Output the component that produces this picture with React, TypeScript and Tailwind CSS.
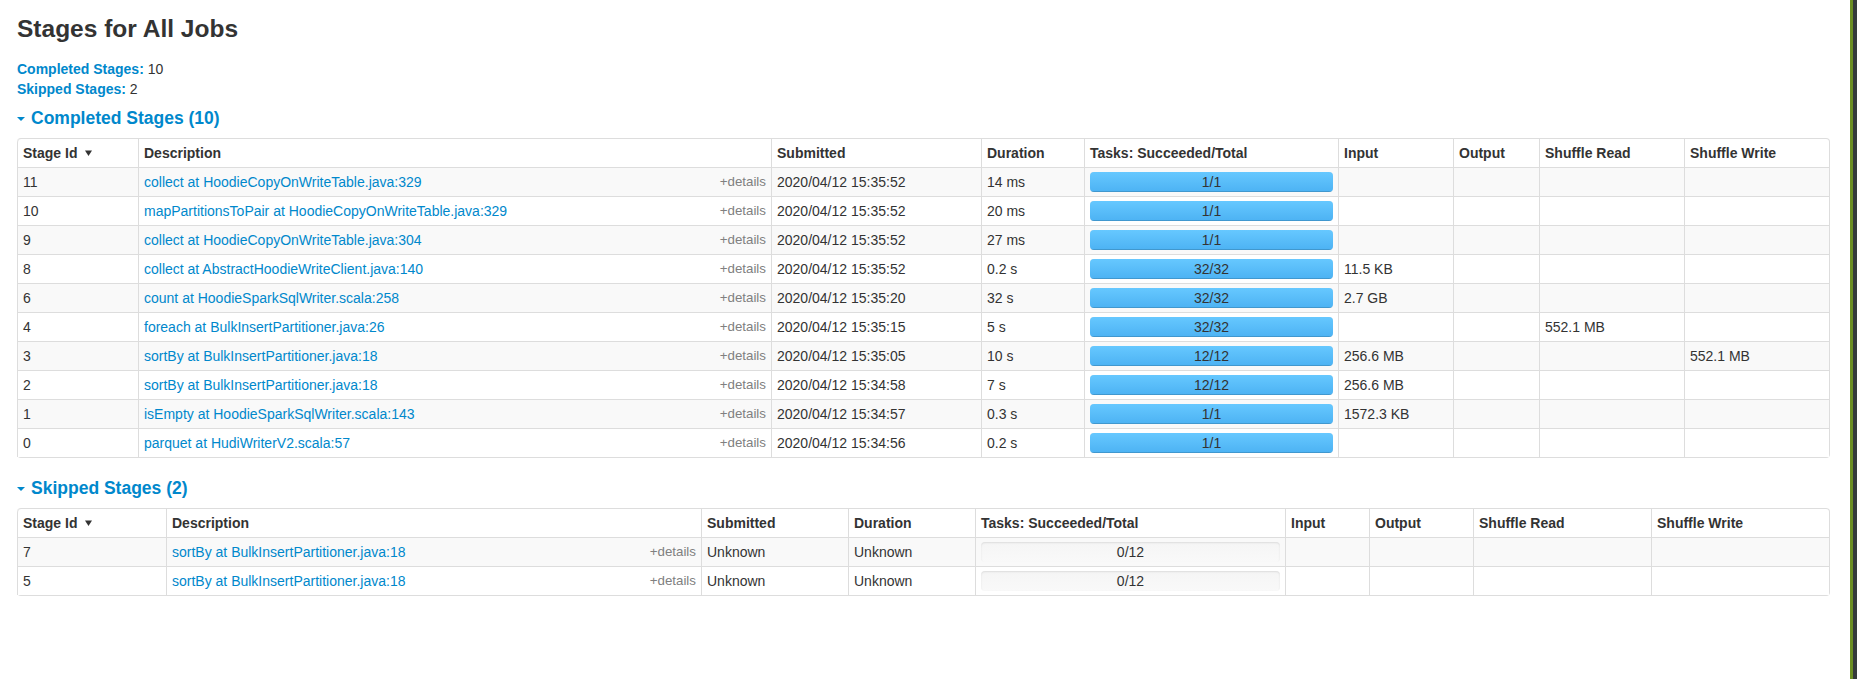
import React from "react"

type Stage = {
  id: string
  desc: string
  submitted: string
  duration: string
  done: number
  total: number
  input?: string
  output?: string
  shuffleRead?: string
  shuffleWrite?: string
}

const completed: Stage[] = [
  { id: "11", desc: "collect at HoodieCopyOnWriteTable.java:329", submitted: "2020/04/12 15:35:52", duration: "14 ms", done: 1, total: 1 },
  { id: "10", desc: "mapPartitionsToPair at HoodieCopyOnWriteTable.java:329", submitted: "2020/04/12 15:35:52", duration: "20 ms", done: 1, total: 1 },
  { id: "9", desc: "collect at HoodieCopyOnWriteTable.java:304", submitted: "2020/04/12 15:35:52", duration: "27 ms", done: 1, total: 1 },
  { id: "8", desc: "collect at AbstractHoodieWriteClient.java:140", submitted: "2020/04/12 15:35:52", duration: "0.2 s", done: 32, total: 32, input: "11.5 KB" },
  { id: "6", desc: "count at HoodieSparkSqlWriter.scala:258", submitted: "2020/04/12 15:35:20", duration: "32 s", done: 32, total: 32, input: "2.7 GB" },
  { id: "4", desc: "foreach at BulkInsertPartitioner.java:26", submitted: "2020/04/12 15:35:15", duration: "5 s", done: 32, total: 32, shuffleRead: "552.1 MB" },
  { id: "3", desc: "sortBy at BulkInsertPartitioner.java:18", submitted: "2020/04/12 15:35:05", duration: "10 s", done: 12, total: 12, input: "256.6 MB", shuffleWrite: "552.1 MB" },
  { id: "2", desc: "sortBy at BulkInsertPartitioner.java:18", submitted: "2020/04/12 15:34:58", duration: "7 s", done: 12, total: 12, input: "256.6 MB" },
  { id: "1", desc: "isEmpty at HoodieSparkSqlWriter.scala:143", submitted: "2020/04/12 15:34:57", duration: "0.3 s", done: 1, total: 1, input: "1572.3 KB" },
  { id: "0", desc: "parquet at HudiWriterV2.scala:57", submitted: "2020/04/12 15:34:56", duration: "0.2 s", done: 1, total: 1 },
]

const skipped: Stage[] = [
  { id: "7", desc: "sortBy at BulkInsertPartitioner.java:18", submitted: "Unknown", duration: "Unknown", done: 0, total: 12 },
  { id: "5", desc: "sortBy at BulkInsertPartitioner.java:18", submitted: "Unknown", duration: "Unknown", done: 0, total: 12 },
]

const headers = ["Stage Id", "Description", "Submitted", "Duration", "Tasks: Succeeded/Total", "Input", "Output", "Shuffle Read", "Shuffle Write"]

const completedCols = [121, 633, 210, 103, 254, 115, 86, 145, 145]
const skippedCols = [149, 535, 147, 127, 310, 84, 104, 178, 178]

function Progress({ done, total }: { done: number; total: number }) {
  return (
    <div className="relative h-5 rounded-[4px] overflow-hidden bg-linear-to-b from-[#f5f5f5] to-[#f9f9f9] shadow-[inset_0_1px_2px_rgba(0,0,0,0.1)]">
      {done > 0 && (
        <div
          className="absolute top-0 left-0 bottom-0 bg-linear-to-b from-[#66c8ff] to-[#4cb2f3] shadow-[inset_0_-1px_0_rgba(0,0,0,0.15)]"
          style={{ width: `${(done / total) * 100}%` }}
        />
      )}
      <span className="absolute inset-0 text-center leading-5 text-[#333]">
        {done}/{total}
      </span>
    </div>
  )
}

function StageTable({ rows, cols }: { rows: Stage[]; cols: number[] }) {
  const cell = "border-l border-t border-[#ddd] px-[5px] py-[4px] leading-5 text-left align-top"
  return (
    <table className="w-full table-fixed border-separate border-spacing-0 border border-l-0 border-[#ddd] rounded-[4px] mb-5">
      <colgroup>
        {cols.map((w, i) => (
          <col key={i} style={{ width: w }} />
        ))}
      </colgroup>
      <thead>
        <tr>
          {headers.map((h, i) => (
            <th
              key={h}
              className={`border-l border-[#ddd] px-[5px] py-[4px] leading-5 text-left font-bold ${i === 0 ? "rounded-tl-[4px]" : ""} ${i === headers.length - 1 ? "rounded-tr-[4px]" : ""}`}
            >
              {h}
              {i === 0 && (
                <svg width="7" height="6" viewBox="0 0 7 6" className="inline-block ml-[8px] mb-[2px]">
                  <polygon points="0,0.5 7,0.5 3.5,6" fill="#333" />
                </svg>
              )}
            </th>
          ))}
        </tr>
      </thead>
      <tbody>
        {rows.map((r, idx) => (
          <tr key={r.id} className={idx % 2 === 0 ? "bg-[#f9f9f9]" : "bg-white"}>
            <td className={cell}>{r.id}</td>
            <td className={cell}>
              <span className="float-right text-[13.33px] text-[#808080]">+details</span>
              <a className="text-[#0088cc]">{r.desc}</a>
            </td>
            <td className={cell}>{r.submitted}</td>
            <td className={cell}>{r.duration}</td>
            <td className={cell}>
              <Progress done={r.done} total={r.total} />
            </td>
            <td className={cell}>{r.input}</td>
            <td className={cell}>{r.output}</td>
            <td className={cell}>{r.shuffleRead}</td>
            <td className={cell}>{r.shuffleWrite}</td>
          </tr>
        ))}
      </tbody>
    </table>
  )
}

function SectionTitle({ children }: { children: React.ReactNode }) {
  return (
    <h4 className="text-[17.5px] leading-5 font-bold text-[#0088cc] mb-[10px]">
      <span className="inline-block w-0 h-0 border-l-[4px] border-r-[4px] border-t-[4px] border-l-transparent border-r-transparent border-t-[#0088cc] mr-[6px] mb-[3px]" />
      {children}
    </h4>
  )
}

export default function App() {
  return (
    <div className="flex h-[679px] bg-white text-[14px] text-[#333]" style={{ fontFamily: '"Liberation Sans", Arial, sans-serif' }}>
      <div className="flex-1 pl-[17px] pr-[20px]">
        <h3 className="mt-[9px] mb-[10px] text-[24.5px] leading-[40px] font-bold">Stages for All Jobs</h3>
        <ul className="leading-5">
          <li>
            <a className="font-bold text-[#0088cc]">Completed Stages:</a> 10
          </li>
          <li>
            <a className="font-bold text-[#0088cc]">Skipped Stages:</a> 2
          </li>
        </ul>
        <div className="mt-[9px]">
          <SectionTitle>Completed Stages (10)</SectionTitle>
        </div>
        <StageTable rows={completed} cols={completedCols} />
        <div className="mt-[1px]">
          <SectionTitle>Skipped Stages (2)</SectionTitle>
        </div>
        <StageTable rows={skipped} cols={skippedCols} />
      </div>
      <div className="w-[3px] bg-[#6b8e23]" />
      <div className="w-[4px] bg-[#353a3c]" />
    </div>
  )
}
